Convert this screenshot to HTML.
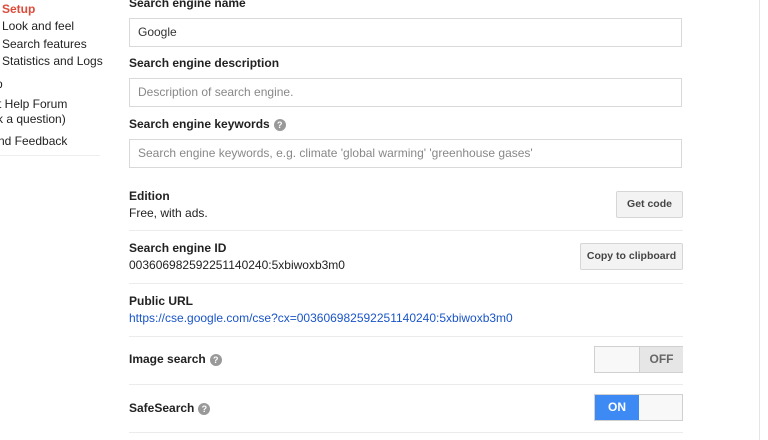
<!DOCTYPE html>
<html><head><style>
body{margin:0;width:768px;height:440px;overflow:hidden;background:#fff;font-family:"Liberation Sans",Arial,sans-serif;color:#222;position:relative}
.a{position:absolute;white-space:nowrap}
.nav{font-size:12px;color:#222}
.lab{font-size:12px;font-weight:bold;color:#222}
.val{font-size:12px;color:#222}
.inp{position:absolute;left:129px;height:27px;border:1px solid #d9d9d9;box-sizing:content-box;font-size:12px;color:#333;line-height:27px;padding-left:8px;width:543px}
.ph{color:#888}
.hr{position:absolute;left:129px;width:554px;height:1px;background:#ebebeb}
.btn{position:absolute;border:1px solid #d6d6d6;background:#f3f3f3;border-radius:2px;font-size:10.5px;font-weight:bold;color:#444;text-align:center;box-sizing:border-box}
.q{display:inline-block;width:12px;height:12px;border-radius:50%;background:#999;color:#fff;font-size:9px;line-height:12px;text-align:center;vertical-align:0;margin-left:4px;font-weight:bold}
.tg{position:absolute;left:594px;width:89px;height:27px;border:1px solid #d0d0d0;box-sizing:border-box;background:#f8f8f8;font-size:12px;font-weight:bold}
</style></head><body>
<div class="a nav" style="left:2px;top:2px;color:#dd4b39;font-weight:bold">Setup</div>
<div class="a nav" style="left:2px;top:19px">Look and feel</div>
<div class="a nav" style="left:2px;top:37px">Search features</div>
<div class="a nav" style="left:2px;top:54px">Statistics and Logs</div>
<div class="a nav" style="left:-4px;top:77px">p</div>
<div class="a nav" style="left:-2px;top:97px">t Help Forum</div>
<div class="a nav" style="left:-3px;top:112px">k a question)</div>
<div class="a nav" style="left:-2px;top:134px">nd Feedback</div>
<div class="a" style="left:0;top:155px;width:100px;height:1px;background:#eee"></div>
<div class="a" style="left:759px;top:0;width:1px;height:440px;background:#e5e5e5"></div>

<div class="a lab" style="left:129px;top:-4px">Search engine name</div>
<div class="inp" style="top:18px">Google</div>
<div class="a lab" style="left:129px;top:56px">Search engine description</div>
<div class="inp ph" style="top:78px">Description of search engine.</div>
<div class="a lab" style="left:129px;top:117px">Search engine keywords<span class="q">?</span></div>
<div class="inp ph" style="top:139px">Search engine keywords, e.g. climate 'global warming' 'greenhouse gases'</div>

<div class="a lab" style="left:129px;top:189px">Edition</div>
<div class="a val" style="left:129px;top:206px">Free, with ads.</div>
<div class="btn" style="left:616px;top:191px;width:67px;height:27px;line-height:25px">Get code</div>
<div class="hr" style="top:230px"></div>
<div class="a lab" style="left:129px;top:241px">Search engine ID</div>
<div class="a val" style="left:129px;top:258px">003606982592251140240:5xbiwoxb3m0</div>
<div class="btn" style="left:580px;top:243px;width:103px;height:27px;line-height:25px">Copy to clipboard</div>
<div class="hr" style="top:283px"></div>
<div class="a lab" style="left:129px;top:294px">Public URL</div>
<div class="a val" style="left:129px;top:311px;color:#1a55c8">https://cse.google.com/cse?cx=003606982592251140240:5xbiwoxb3m0</div>
<div class="hr" style="top:336px"></div>
<div class="a lab" style="left:129px;top:352px">Image search<span class="q">?</span></div>
<div class="tg" style="top:346px"><div class="a" style="left:44px;top:0;width:43px;height:25px;background:#e6e6e6;color:#666;text-align:center;line-height:25px;border-left:1px solid #d0d0d0">OFF</div></div>
<div class="hr" style="top:384px"></div>
<div class="a lab" style="left:129px;top:401px">SafeSearch<span class="q">?</span></div>
<div class="tg" style="top:394px"><div class="a" style="left:0;top:0;width:44px;height:25px;background:#3d8af5;color:#fff;text-align:center;line-height:25px">ON</div></div>
<div class="hr" style="top:432px"></div>
</body></html>
